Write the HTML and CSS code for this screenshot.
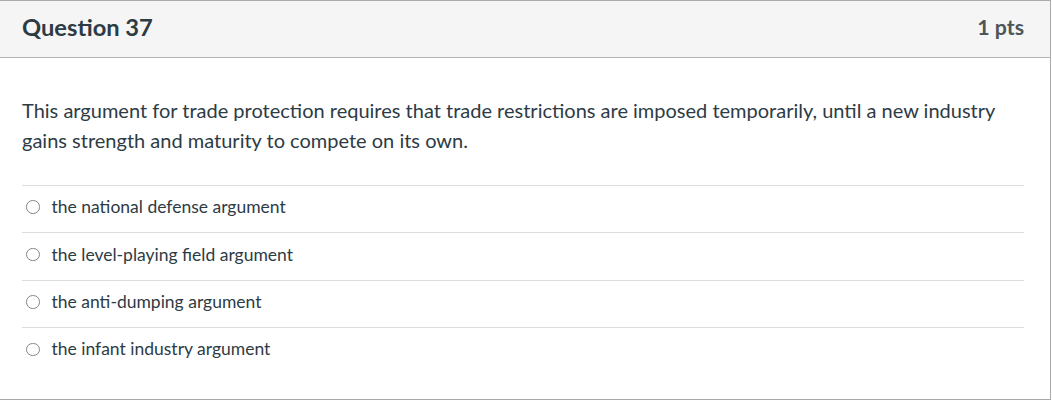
FILE: index.html
```html
<!DOCTYPE html>
<html>
<head>
<meta charset="utf-8">
<link rel="stylesheet" href="styles.css">
</head>
<body>
<div class="card">
  <div class="header">
    <h2 class="title">Question 37</h2>
    <span class="pts">1 pts</span>
  </div>
  <div class="content">
    <p class="question">This argument for trade protection requires that trade restrictions are imposed temporarily, until a new industry gains strength and maturity to compete on its own.</p>
    <div class="answers">
      <label class="answer"><span class="radio"></span><span class="label">the national defense argument</span></label>
      <label class="answer"><span class="radio"></span><span class="label">the level-playing field argument</span></label>
      <label class="answer"><span class="radio"></span><span class="label">the anti-dumping argument</span></label>
      <label class="answer"><span class="radio"></span><span class="label">the infant industry argument</span></label>
    </div>
  </div>
</div>
</body>
</html>
```
FILE: styles.css
```css
html, body {
  margin: 0;
  padding: 0;
  background: #ffffff;
}
body {
  font-family: Lato, "Open Sans", sans-serif;
  color: #2d3b45;
}
.card {
  width: 1050px;
  height: 398px;
  border-top: 1px solid #aaaaaa;
  border-right: 1px solid #aaaaaa;
  border-bottom: 1px solid #aaaaaa;
  box-sizing: content-box;
}
.header {
  height: 52px;
  background: #f5f5f5;
  border-bottom: 1px solid #b5b5b5;
  display: flex;
  align-items: center;
  justify-content: space-between;
  padding: 0 26px 4px 22px;
}
.title {
  margin: 0;
  font-size: 23.7px;
  font-weight: 700;
  color: #2d3b45;
}
.pts {
  font-size: 21.3px;
  font-weight: 700;
  color: #4f5458;
}
.content {
  padding: 37px 26px 0 22px;
}
.question {
  margin: 0 0 30px 0;
  font-size: 20px;
  line-height: 30px;
}
.answers {
  border-top: 1px solid #dddddd;
}
.answer {
  display: flex;
  align-items: center;
  padding: 9.2px 0 13.2px 4px;
  line-height: 24px;
  font-size: 17.5px;
  border-bottom: 1px solid #dddddd;
}
.answer:last-child {
  border-bottom: none;
}
.radio {
  width: 11.5px;
  height: 11.5px;
  border: 1.1px solid #858585;
  border-radius: 50%;
  background: #fff;
  margin-right: 12px;
  flex: none;
}
```
